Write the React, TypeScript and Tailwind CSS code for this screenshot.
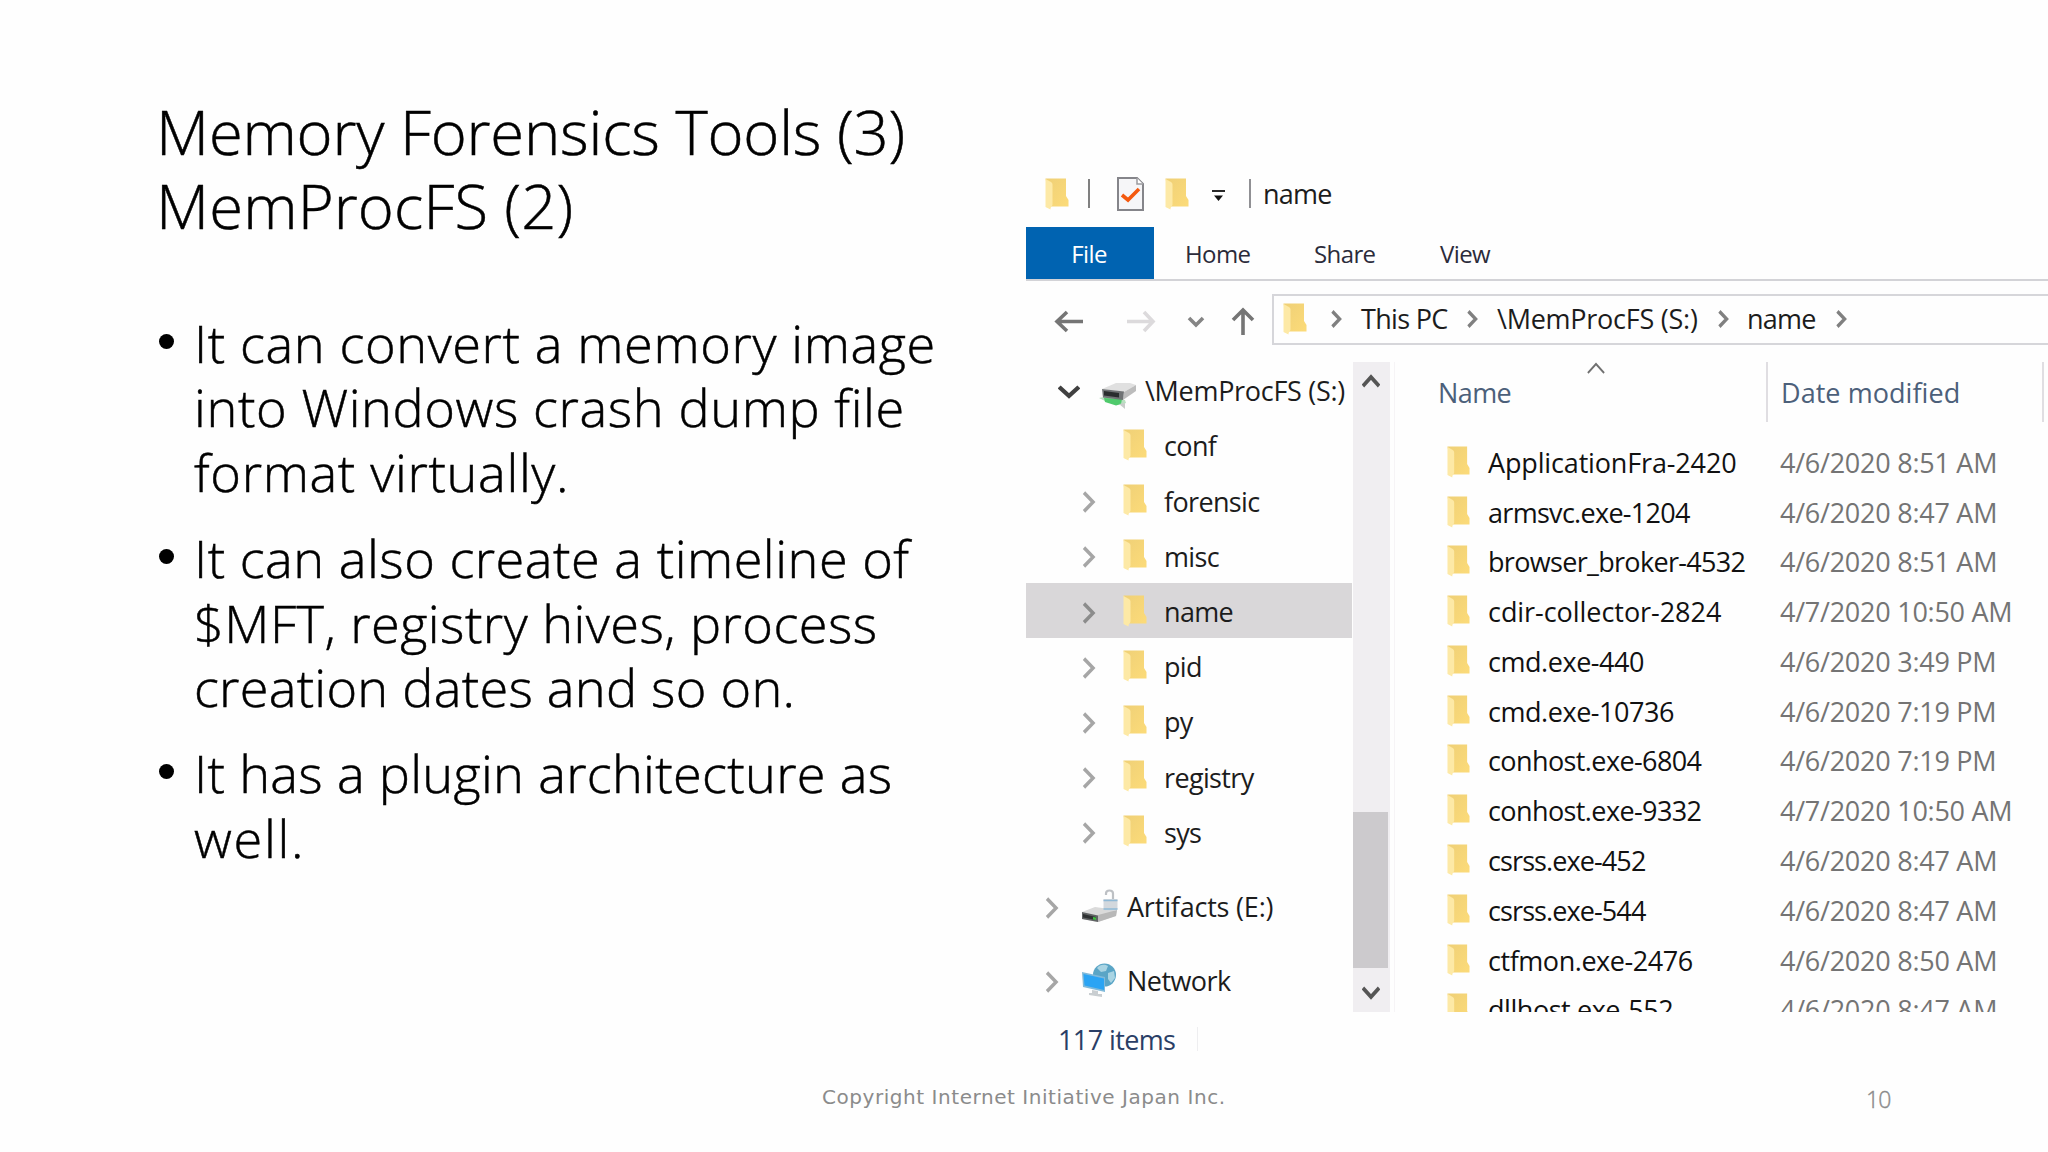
import React, { FC } from "react";

interface ChevronProps {
  dir: "right" | "down" | "up";
  className?: string;
  weight?: number;
}

const PATHS = {
  right: "M3 1.5 L12 10 L3 18.5",
  down: "M1 5 L10 14 L19 5",
  up: "M1 14 L10 5 L19 14",
};

const Chevron: FC<ChevronProps> = ({ dir, className = "", weight = 3.4 }) => (
  <svg
    viewBox="0 0 20 20"
    preserveAspectRatio="none"
    fill="none"
    stroke="currentColor"
    strokeWidth={weight}
    className={`shrink-0 ${className}`}
  >
    <path d={PATHS[dir]} />
  </svg>
);

const Folder: FC<{ className?: string }> = ({ className = "" }) => (
  <svg
    viewBox="0 0 24 32"
    preserveAspectRatio="none"
    className={`shrink-0 ${className}`}
  >
    <defs>
      <linearGradient id="folderBack" x1="0" x2="1" y1="0" y2="1">
        <stop offset="0" stopColor="#efd077" />
        <stop offset="1" stopColor="#fcdb79" />
      </linearGradient>
    </defs>
    <path d="M0.5 0.5H21V18L23.5 22V28.5H6Z" fill="url(#folderBack)" />
    <path
      d="M0.5 0.5C2 3 7.5 3 7.5 6.5V26.5C7.5 28 5.5 28.5 5.5 31.5L0.5 29Z"
      fill="#fde9a6"
    />
  </svg>
);

const Drive: FC = () => (
  <svg viewBox="0 0 38 26" className="h-[26px] w-[38px] shrink-0">
    <path d="M3 6L17 0H31L37 2L25 9Z" fill="#e0e0e0" />
    <path d="M25 9L37 2V8L24 17Z" fill="#bcbcbc" />
    <path d="M0 15L5 14L26 17L27 20L22 22L6 18Z" fill="#b9dfc0" />
    <path d="M5 15L23 16L22 21L17 22.5L6 19Z" fill="#4fca6c" />
    <path d="M3 6L25 8.5L24 17L4 14.5Z" fill="#6f7274" />
    <path d="M5 8L20 10V14.5L5 12.5Z" fill="#2a2d2e" />
    <path d="M20 21L26 20V26Z" fill="#c8cdca" />
  </svg>
);

const LockedDrive: FC = () => (
  <svg viewBox="0 0 36 34" className="h-[34px] w-9 shrink-0">
    <path d="M0 23L13 18L35 21L34 27L16 33L0 30Z" fill="#dadada" />
    <path d="M16 26L35 21L34 27L16 33Z" fill="#b8b8b8" />
    <path d="M0 23L16 26.5V33L0 30Z" fill="#606364" />
    <path d="M1 25L14 28V31L1 28.5Z" fill="#2e3132" />
    <path d="M11 28L14 28.5V31L11 30.5Z" fill="#3fbf3f" />
    <path
      d="M24 6V4.5C24 0.5 31 0.5 31 4.5V10"
      fill="none"
      stroke="#bdc0c4"
      strokeWidth="2.2"
    />
    <path d="M21.5 10H35.5V20C35.5 22.5 21.5 22.5 21.5 20Z" fill="#d3d8dd" />
    <path d="M21.5 11.5H35.5M21.5 20H35.5" stroke="#8fb9d6" strokeWidth="1.4" />
  </svg>
);

const NetworkIcon: FC = () => (
  <svg viewBox="0 0 36 34" className="h-[34px] w-9 shrink-0">
    <circle cx="22.5" cy="12" r="11.5" fill="#5aa5c6" />
    <path
      d="M15 5C18 1 23 1 26 3L24 8L19 9ZM26 10L32 8L33 15L29 20L26 16Z"
      fill="#a9d4e3"
    />
    <path d="M0 9L23 14V29L1 24Z" fill="#7fb9da" />
    <path d="M1.5 11L22 15.5V27L2.5 22.5Z" fill="#2aa4f4" />
    <path d="M10 27L16 28V31H20V34L7 32V30H10Z" fill="#c9ced1" />
  </svg>
);

const BULLETS = [
  [
    { text: "It can convert a memory image", tracking: "tracking-[0.6px]" },
    { text: "into Windows crash dump file", tracking: "tracking-[0.6px]" },
    { text: "format virtually.", tracking: "tracking-[0.65px]" },
  ],
  [
    { text: "It can also create a timeline of", tracking: "tracking-[0.5px]" },
    { text: "$MFT, registry hives, process", tracking: "tracking-[0.45px]" },
    { text: "creation dates and so on.", tracking: "tracking-[0.25px]" },
  ],
  [
    { text: "It has a plugin architecture as", tracking: "tracking-[0.3px]" },
    { text: "well.", tracking: "tracking-[1.7px]" },
  ],
];

const TREE = ["conf", "forensic", "misc", "name", "pid", "py", "registry", "sys"];

const FILES = [
  { name: "ApplicationFra-2420", date: "4/6/2020 8:51 AM", tracking: "tracking-[-0.15px]" },
  { name: "armsvc.exe-1204", date: "4/6/2020 8:47 AM", tracking: "tracking-[-0.7px]" },
  { name: "browser_broker-4532", date: "4/6/2020 8:51 AM", tracking: "tracking-[-0.68px]" },
  { name: "cdir-collector-2824", date: "4/7/2020 10:50 AM", tracking: "tracking-[-0.05px]" },
  { name: "cmd.exe-440", date: "4/6/2020 3:49 PM", tracking: "tracking-[-0.45px]" },
  { name: "cmd.exe-10736", date: "4/6/2020 7:19 PM", tracking: "tracking-[-0.45px]" },
  { name: "conhost.exe-6804", date: "4/6/2020 7:19 PM", tracking: "tracking-[-0.6px]" },
  { name: "conhost.exe-9332", date: "4/7/2020 10:50 AM", tracking: "tracking-[-0.6px]" },
  { name: "csrss.exe-452", date: "4/6/2020 8:47 AM", tracking: "tracking-[-0.9px]" },
  { name: "csrss.exe-544", date: "4/6/2020 8:47 AM", tracking: "tracking-[-0.9px]" },
  { name: "ctfmon.exe-2476", date: "4/6/2020 8:50 AM", tracking: "tracking-[-0.45px]" },
  { name: "dllhost.exe-552", date: "4/6/2020 8:47 AM", tracking: "tracking-[-0.45px]" },
];

const SlideText: FC = () => (
  <section className="w-[1026px] shrink-0 pl-[157px] pt-[95px] font-['Open_Sans',sans-serif] font-light text-black [-webkit-text-stroke:0.5px_black]">
    <h1 className="ml-[-1px] whitespace-nowrap text-[61.5px] leading-[73.5px]">
      <span className="block tracking-[-0.2px]">Memory Forensics Tools (3)</span>
      <span className="block tracking-[0.15px]">MemProcFS (2)</span>
    </h1>
    <ul className="mt-[69px] flex flex-col gap-[22px] text-[52.3px] leading-[64.4px]">
      {BULLETS.map((lines) => (
        <li key={lines[0].text} className="flex">
          <span className="mr-[20px] mt-[23px] ml-[2px] size-[15px] shrink-0 rounded-full bg-black" />
          <p className="whitespace-nowrap">
            {lines.map((line) => (
              <span key={line.text} className={`block ${line.tracking}`}>
                {line.text}
              </span>
            ))}
          </p>
        </li>
      ))}
    </ul>
  </section>
);

const TitleBar: FC = () => (
  <div className="flex h-[58px] items-center pl-[19px] pb-[9px]">
    <Folder className="h-8 w-6" />
    <span className="ml-[19px] h-[29px] w-[2px] bg-[#808080]" />
    <svg viewBox="0 0 27 34" className="ml-[27px] h-[34px] w-[27px]">
      <path d="M1 1H20L26 7V33H1Z" fill="#f6f6f8" stroke="#85858a" strokeWidth="2" />
      <path d="M20 1V7H26" fill="#fff" stroke="#9a9a9e" strokeWidth="1.5" />
      <path d="M5 18L11 23L22 12" fill="none" stroke="#f4590f" strokeWidth="3.6" />
    </svg>
    <Folder className="ml-[21px] h-8 w-6" />
    <svg viewBox="0 0 13 12" className="ml-[23px] mt-1 h-3 w-[13px]">
      <path d="M0 1H13" stroke="#111" strokeWidth="1.8" />
      <path d="M2 5.5H11L6.5 11Z" fill="#111" />
    </svg>
    <span className="ml-[24px] h-[29px] w-[2px] bg-[#909094]" />
    <span className="ml-[12px] tracking-[-0.8px]">name</span>
  </div>
);

const Tabs: FC = () => (
  <div className="flex h-[54px] items-start border-b-2 border-[#d3d3d7] text-[24px] leading-[54px] tracking-[-0.6px] text-[#2b2b3a]">
    <span className="h-[52px] w-32 bg-[#0063b1] pr-[2px] text-center text-white">File</span>
    <span className="ml-[31px] w-[129px]">Home</span>
    <span className="w-[126px]">Share</span>
    <span>View</span>
  </div>
);

const AddressBar: FC = () => (
  <div className="mt-[13px] flex h-[51px] items-center">
    <svg
      viewBox="0 0 230 30"
      fill="none"
      strokeWidth="3.6"
      className="h-[30px] w-[230px] shrink-0"
      stroke="#757575"
    >
      <path d="M30 16.5H57M41 7L31 16.5L41 26" />
      <path d="M101 16.5H128M118 7L127 16.5L118 26" stroke="#dcdadc" />
      <path d="M163 13L170 20L177 13" stroke="#858585" />
      <path d="M217 31V6M207 15L217 5L227 15" />
    </svg>
    <div className="ml-[16px] flex h-[51px] flex-1 items-center border-y-2 border-l-2 border-[#d6d6da] pb-[2px] pl-[9px]">
      <Folder className="h-8 w-6" />
      <Chevron dir="right" className="ml-[23px] h-[18px] w-[16px] text-[#808080]" weight={4} />
      <span className="ml-[15px] w-[105px] tracking-[-0.7px]">This PC</span>
      <Chevron dir="right" className="h-[18px] w-[16px] text-[#808080]" weight={4} />
      <span className="ml-[15px] w-[220px] tracking-[-0.25px]">\MemProcFS (S:)</span>
      <Chevron dir="right" className="h-[18px] w-[16px] text-[#808080]" weight={4} />
      <span className="ml-[14px] w-[88px] tracking-[-0.8px]">name</span>
      <Chevron dir="right" className="h-[18px] w-[16px] text-[#808080]" weight={4} />
    </div>
  </div>
);

const NavTree: FC = () => (
  <div className="w-[327px] shrink-0 overflow-hidden whitespace-nowrap">
    <div className="flex h-[55.4px] items-center pl-[32px]">
      <Chevron dir="down" className="mt-[4px] h-[20px] w-[22px] text-[#404040]" weight={4} />
      <span className="ml-[19px] mt-[13px]">
        <Drive />
      </span>
      <span className="ml-[8px] mt-[2px] tracking-[-0.3px]">\MemProcFS (S:)</span>
    </div>
    {TREE.map((item) => (
      <div
        key={item}
        className={`mr-[1px] flex h-[55.2px] items-center pl-[55px] ${
          item === "name" ? "bg-[#d9d7d9]" : ""
        }`}
      >
        <Chevron
          dir="right"
          className={`mt-1 h-[22px] w-[20px] ${
            item === "conf" ? "invisible" : item === "name" ? "text-[#8c8c8c]" : "text-[#a6a6a6]"
          }`}
        />
        <Folder className="ml-[22px] h-8 w-6" />
        <span className="ml-[17px] mt-[2px] tracking-[-0.65px]">{item}</span>
      </div>
    ))}
    <div className="mt-[10.6px] flex h-[73.6px] items-center pl-[18px]">
      <Chevron dir="right" className="mt-1 h-[22px] w-[20px] text-[#a6a6a6]" />
      <span className="ml-[18px]">
        <LockedDrive />
      </span>
      <span className="ml-[9px] mt-[1px] tracking-[-0.2px]">Artifacts (E:)</span>
    </div>
    <div className="flex h-[73.6px] items-center pl-[18px]">
      <Chevron dir="right" className="mt-1 h-[22px] w-[20px] text-[#a6a6a6]" />
      <span className="ml-[18px]">
        <NetworkIcon />
      </span>
      <span className="ml-[9px] mt-[2px] tracking-[-0.55px]">Network</span>
    </div>
  </div>
);

const ScrollBar: FC = () => (
  <div className="flex w-[37px] shrink-0 flex-col items-center bg-[#f0eef1]">
    <Chevron dir="up" className="mt-[10px] mr-[2px] h-5 w-[18px] text-[#555]" weight={4} />
    <span className="mt-[420px] mr-[2px] h-[156px] w-[35px] bg-[#cccacd]" />
    <Chevron dir="down" className="mt-[15px] mr-[2px] h-5 w-[18px] text-[#555]" weight={4} />
  </div>
);

const FileList: FC = () => (
  <div className="flex-1 overflow-hidden whitespace-nowrap border-l border-[#f6f4f6] ml-[4px]">
    <div className="flex h-[60px] items-center text-[#4c607a]">
      <div className="relative flex h-full w-[373px] items-center border-r-2 border-[#e0dee2] pl-[43px]">
        <span className="tracking-[-0.6px]">Name</span>
        <Chevron
          dir="up"
          className="absolute left-[192px] top-[-3px] h-5 w-[18px] text-[#707070]"
          weight={2}
        />
      </div>
      <div className="flex h-full w-[276px] items-center border-r-2 border-[#e0dee2] pl-[13px]">
        <span className="tracking-[0.05px]">Date modified</span>
      </div>
    </div>
    <div className="pt-[15px]">
      {FILES.map((file) => (
        <div key={file.name} className="flex h-[49.77px] items-center pl-[52px]">
          <Folder className="h-8 w-[23px]" />
          <span className={`ml-[18px] mt-[1px] w-[292px] text-[#111] ${file.tracking}`}>
            {file.name}
          </span>
          <span className="mt-[1px] tracking-[-0.25px] text-[#747474]">{file.date}</span>
        </div>
      ))}
    </div>
  </div>
);

const Explorer: FC = () => (
  <section className="flex h-[1066px] w-[1022px] flex-col whitespace-nowrap pt-[169px] font-['Open_Sans',sans-serif] text-[27px] leading-none text-[#1c1c1c]">
    <TitleBar />
    <Tabs />
    <AddressBar />
    <div className="mt-[17px] flex h-[650px] shrink-0 overflow-hidden">
      <NavTree />
      <ScrollBar />
      <FileList />
    </div>
    <div className="flex h-[54px] items-center pl-[32px] tracking-[-0.6px] text-[#2a3e66]">
      <span>117 items</span>
      <span className="ml-[22px] h-6 w-[1px] bg-[#eeeef0]" />
    </div>
  </section>
);

export default function App() {
  return (
    <main className="flex h-[1152px] w-[2048px] flex-col overflow-hidden bg-[#fefefe]">
      <div className="flex h-[1066px]">
        <SlideText />
        <Explorer />
      </div>
      <footer className="flex h-[62px] items-center text-[#8b8b8b]">
        <span className="ml-[822px] w-[1044px] font-['DejaVu_Sans',sans-serif] text-[20px] tracking-[0.55px]">
          Copyright Internet Initiative Japan Inc.
        </span>
        <span className="mt-1 font-['Open_Sans',sans-serif] text-[23px] font-light tracking-[-1px] [-webkit-text-stroke:0.4px_#8b8b8b]">
          10
        </span>
      </footer>
    </main>
  );
}
